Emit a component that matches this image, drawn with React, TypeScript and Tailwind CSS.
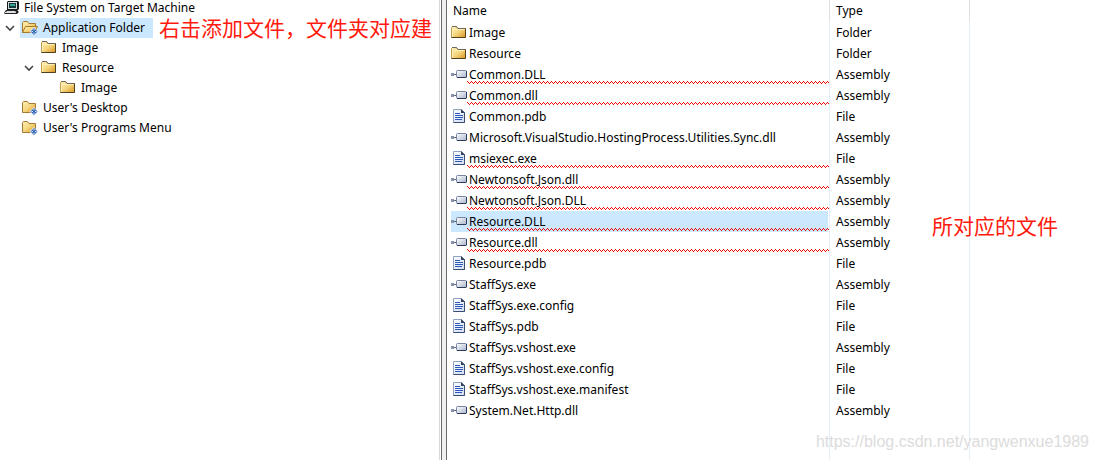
import React from "react";

type Kind = "folder" | "assembly" | "file";

interface FileEntry {
  name: string;
  kind: Kind;
  warn?: boolean;
  selected?: boolean;
}

const files: FileEntry[] = [
  { name: "Image", kind: "folder" },
  { name: "Resource", kind: "folder" },
  { name: "Common.DLL", kind: "assembly", warn: true },
  { name: "Common.dll", kind: "assembly", warn: true },
  { name: "Common.pdb", kind: "file" },
  { name: "Microsoft.VisualStudio.HostingProcess.Utilities.Sync.dll", kind: "assembly" },
  { name: "msiexec.exe", kind: "file", warn: true },
  { name: "Newtonsoft.Json.dll", kind: "assembly", warn: true },
  { name: "Newtonsoft.Json.DLL", kind: "assembly", warn: true },
  { name: "Resource.DLL", kind: "assembly", warn: true, selected: true },
  { name: "Resource.dll", kind: "assembly", warn: true },
  { name: "Resource.pdb", kind: "file" },
  { name: "StaffSys.exe", kind: "assembly" },
  { name: "StaffSys.exe.config", kind: "file" },
  { name: "StaffSys.pdb", kind: "file" },
  { name: "StaffSys.vshost.exe", kind: "assembly" },
  { name: "StaffSys.vshost.exe.config", kind: "file" },
  { name: "StaffSys.vshost.exe.manifest", kind: "file" },
  { name: "System.Net.Http.dll", kind: "assembly" },
];

const typeNames: Record<Kind, string> = {
  folder: "Folder",
  assembly: "Assembly",
  file: "File",
};

// Gradients and the squiggle pattern shared by every icon on the page
const Defs = () => (
  <svg className="absolute size-0" aria-hidden="true">
    <defs>
      <linearGradient id="folder" x1="0" y1="0" x2="1" y2="1">
        <stop offset="0" stopColor="#fff0b8" />
        <stop offset="0.5" stopColor="#f5d67e" />
        <stop offset="1" stopColor="#d9921f" />
      </linearGradient>
      <linearGradient id="paper" x1="0" y1="0" x2="1" y2="1">
        <stop offset="0" stopColor="#ffffff" />
        <stop offset="1" stopColor="#cfdcf2" />
      </linearGradient>
      <linearGradient id="block" x1="0" y1="0" x2="1" y2="1">
        <stop offset="0" stopColor="#ffffff" />
        <stop offset="1" stopColor="#a9b4cb" />
      </linearGradient>
      <pattern id="squiggle" width="4" height="3" patternUnits="userSpaceOnUse">
        <path
          d="M0 0h1v1H0zM1 1h1v1H1zM2 2h1v1H2zM3 1h1v1H3z"
          fill="#f00000"
          shapeRendering="crispEdges"
        />
      </pattern>
    </defs>
  </svg>
);

const FolderIcon = () => (
  <svg className="size-4 shrink-0" viewBox="0 0 16 16" aria-hidden="true">
    <path d="M0.5 12.5V2.5L1.5 1.5H5.5L7 3.5H14.5V12.5Z" fill="url(#folder)" stroke="#c39a4e" />
    <path d="M1 1.5H5.5L7 3.5H14.5" fill="none" stroke="#6d675b" />
    <path d="M1.5 11.5V4.5H13.5" fill="none" stroke="#fff0b8" />
    <path d="M14.5 3.5V12.5H0.5" fill="none" stroke="#50411f" />
  </svg>
);

const Badge = () => (
  <g>
    <path d="M12 7L16 11.5L12 16L7.5 11.5Z" fill="#edf4ff" />
    <path d="M12 8L15.5 11.5L12 15L8.5 11.5Z" fill="#2f62b4" />
    <path d="M12 9V14M9.5 11.5H14.5" stroke="#e2efff" />
    <rect x="11" y="10.5" width="2" height="2" fill="#245caa" />
  </g>
);

const SpecialFolderIcon = ({ open }: { open?: boolean }) => (
  <svg className="size-4 shrink-0" viewBox="0 0 16 16" aria-hidden="true">
    <path d="M0.5 12.5V2.5L1.5 1.5H5.5L7 3.5H13.5V12.5Z" fill="url(#folder)" stroke="#a47a35" />
    {open && (
      <path d="M0.5 12.5L3.5 6.5H15.5L12.5 12.5Z" fill="url(#folder)" stroke="#a8792b" />
    )}
    <Badge />
  </svg>
);

const AssemblyIcon = () => (
  <svg className="size-4 shrink-0" viewBox="0 0 16 16" aria-hidden="true">
    <rect x="0" y="6" width="3" height="3" fill="#8793a8" />
    <path d="M3 7.5H5" stroke="#59667c" />
    <rect x="5.5" y="3.5" width="10" height="7" rx="1" fill="url(#block)" stroke="#7885a0" />
    <path d="M6 10.5H15L15.5 10V4" fill="none" stroke="#2d3c5a" />
  </svg>
);

const FileIcon = () => (
  <svg className="size-4 shrink-0" viewBox="0 0 16 16" aria-hidden="true">
    <path d="M2.5 0.5H10.5L13.5 3.5V13.5H2.5Z" fill="url(#paper)" stroke="#8fa1c0" />
    <path d="M13.5 3.5V13.5H2.5" fill="none" stroke="#3a4c70" />
    <path d="M10 0L14 4H10Z" fill="#33435f" />
    <path d="M4 4.5H9M4 6.5H12M4 8.5H12M4 10.5H11" stroke="#2c58bd" />
  </svg>
);

const ComputerIcon = () => (
  <svg className="size-4 shrink-0" viewBox="0 0 16 16" aria-hidden="true">
    <path d="M4 1H14L15 2V9L13 11H3V2Z" fill="#16191b" />
    <path d="M4 2H13V9H4Z" fill="#d8dcdc" />
    <path d="M5 3H12V8H5Z" fill="#123c3b" />
    <path d="M6 4H11V6H6Z" fill="#38a39a" />
    <path d="M2 10H13L15 12L13 14H1L0 13Z" fill="#202426" />
    <path d="M3 11H12L11 12H2ZM1 12H12V13H1Z" fill="#dce0e0" />
  </svg>
);

const kindIcons: Record<Kind, React.ReactNode> = {
  folder: <FolderIcon />,
  assembly: <AssemblyIcon />,
  file: <FileIcon />,
};

const Chevron = ({ label }: { label: string }) => (
  <button type="button" aria-label={label} className="flex h-5 w-5 shrink-0 items-center justify-center">
    <svg className="size-3" viewBox="0 0 12 12" fill="none" aria-hidden="true">
      <path d="M2 4L6 8L10 4" stroke="#454545" strokeWidth="1.6" />
    </svg>
  </button>
);

interface TreeRowProps {
  label: string;
  icon: React.ReactNode;
  expanded?: boolean;
  selected?: boolean;
  note?: string;
}

const TreeRow = ({ label, icon, expanded, selected, note }: TreeRowProps) => (
  <div className="flex h-5 items-center whitespace-nowrap">
    {expanded ? <Chevron label={`Collapse ${label}`} /> : <span className="w-5 shrink-0" />}
    <span
      className={`flex h-5 items-center gap-[5px] pl-0.5 pr-2 ${selected ? "bg-[#cce8ff]" : ""}`}
    >
      {icon}
      {label}
    </span>
    {note && <span className="ml-1.5 text-[21px] leading-5 text-[#ff1a0d]">{note}</span>}
  </div>
);

const FolderTree = () => (
  <nav aria-label="File system" className="w-[439px] shrink-0">
    <div className="flex h-[18px] items-center gap-1 pb-0.5 pl-1 leading-4">
      <ComputerIcon />
      File System on Target Machine
    </div>
    <ul>
      <li>
        <TreeRow
          label="Application Folder"
          icon={<SpecialFolderIcon open />}
          expanded
          selected
          note="右击添加文件，文件夹对应建"
        />
        <ul className="pl-[19px]">
          <li>
            <TreeRow label="Image" icon={<FolderIcon />} />
          </li>
          <li>
            <TreeRow label="Resource" icon={<FolderIcon />} expanded />
            <ul className="pl-[19px]">
              <li>
                <TreeRow label="Image" icon={<FolderIcon />} />
              </li>
            </ul>
          </li>
        </ul>
      </li>
      <li>
        <TreeRow label="User's Desktop" icon={<SpecialFolderIcon />} />
      </li>
      <li>
        <TreeRow label="User's Programs Menu" icon={<SpecialFolderIcon />} />
      </li>
    </ul>
  </nav>
);

const FileList = () => (
  <table className="h-screen w-full table-fixed border-separate border-spacing-0 text-left">
    <colgroup>
      <col className="w-[383px]" />
      <col className="w-[140px]" />
      <col />
    </colgroup>
    <thead>
      <tr className="h-[22px]">
        <th className="border-r border-[#e0e0e0] p-0 pl-1.5 font-normal">Name</th>
        <th className="border-r border-[#e0e0e0] p-0 pl-1.5 font-normal">Type</th>
        <td />
      </tr>
    </thead>
    <tbody>
      {files.map((file) => (
        <tr key={file.name} className="h-[21px]">
          <td className="border-r border-[#e4eff9] p-0 pl-1">
            <div
              className={`relative mr-px flex h-[21px] items-center gap-0.5 whitespace-nowrap ${
                file.selected ? "bg-[#cce8ff]" : ""
              }`}
            >
              {kindIcons[file.kind]}
              {file.name}
              {file.warn && (
                <svg className="absolute bottom-px left-4 h-[3px] w-[calc(100%-15px)]" aria-hidden="true">
                  <rect width="100%" height="3" fill="url(#squiggle)" />
                </svg>
              )}
            </div>
          </td>
          <td className="border-r border-[#e4eff9] p-0 pl-1.5">{typeNames[file.kind]}</td>
          <td />
        </tr>
      ))}
      {/* Empty row keeps the column lines running to the bottom */}
      <tr>
        <td className="border-r border-[#e4eff9]" />
        <td className="border-r border-[#e4eff9]" />
        <td />
      </tr>
    </tbody>
  </table>
);

export default function App() {
  return (
    <div className="relative flex min-h-screen overflow-hidden bg-white font-['Noto_Sans','Noto_Sans_CJK_SC',sans-serif] text-[12px] leading-5 text-black">
      <Defs />
      <FolderTree />
      <div className="flex w-2 shrink-0 border-l border-[#d9d9d9] pl-px">
        <div className="flex-1 border-x border-[#696969] bg-[#f0f0f0]" />
      </div>
      <main className="min-w-0 flex-1">
        <FileList />
      </main>
      <p className="absolute left-[932px] top-[216px] text-[21px] leading-5 text-[#ff1a0d]">所对应的文件</p>
      <p className="absolute bottom-2 right-2 font-['Liberation_Sans',sans-serif] text-[16px] leading-5 text-[#dcdcdc]">
        https://blog.csdn.net/yangwenxue1989
      </p>
    </div>
  );
}
